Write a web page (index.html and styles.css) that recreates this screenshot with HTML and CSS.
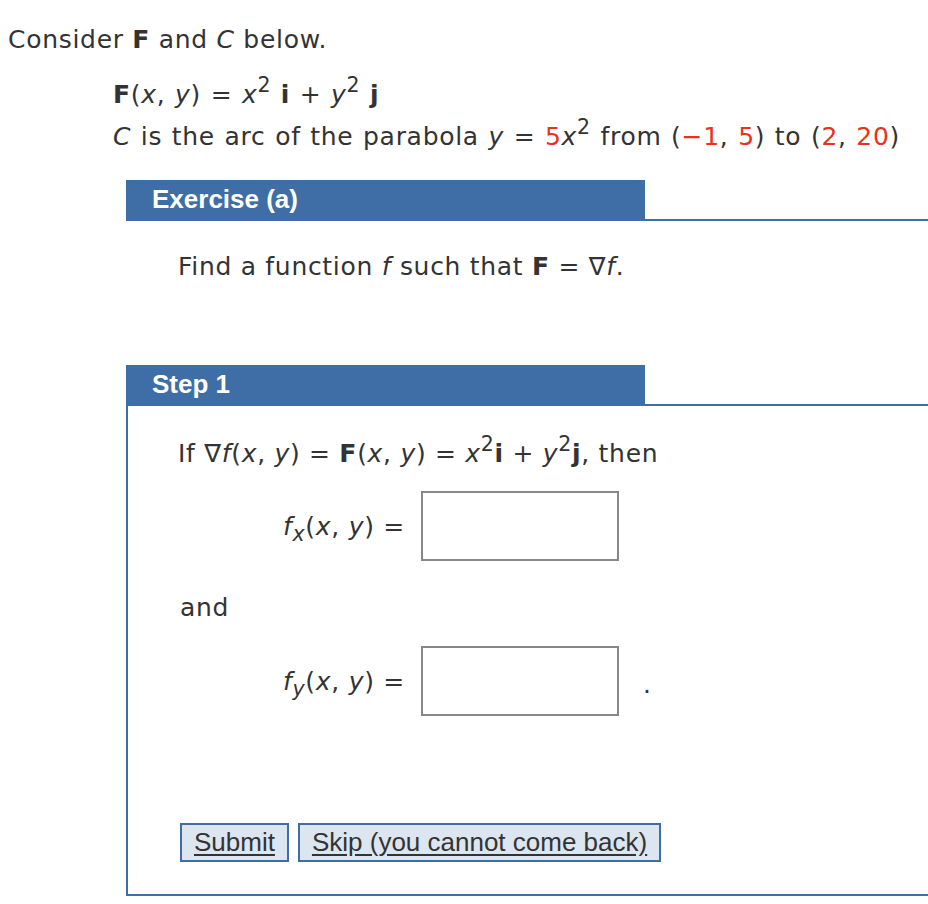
FILE: index.html
```html
<!DOCTYPE html>
<html>
<head>
<meta charset="utf-8">
<link rel="stylesheet" href="styles.css">
</head>
<body>
<div class="page">
  <p class="intro">Consider <b>F</b> and <i>C</i> below.</p>
  <div class="given">
    <div><b>F</b>(<i>x</i>, <i>y</i>) = <i>x</i><sup>2</sup> <b>i</b> + <i>y</i><sup>2</sup> <b>j</b></div>
    <div><i>C</i> is the arc of the parabola <i>y</i> = <span class="red">5</span><i>x</i><sup>2</sup> from (<span class="red">&minus;1</span>, <span class="red">5</span>) to (<span class="red">2</span>, <span class="red">20</span>)</div>
  </div>

  <div class="section exercise">
    <div class="head"><div class="tab">Exercise (a)</div></div>
    <p class="question">Find a function <i>f</i> such that <b>F</b> = &nabla;<i>f</i>.</p>
  </div>

  <div class="section step">
    <div class="head"><div class="tab">Step 1</div></div>
    <div class="body">
      <p class="line">If &nabla;<i>f</i>(<i>x</i>, <i>y</i>) = <b>F</b>(<i>x</i>, <i>y</i>) = <i>x</i><sup>2</sup><b>i</b> + <i>y</i><sup>2</sup><b>j</b>, then</p>
      <div class="row row-x">
        <span class="label"><i>f</i><sub><i>x</i></sub>(<i>x</i>, <i>y</i>) =</span>
        <span class="box"></span>
      </div>
      <p class="line and">and</p>
      <div class="row row-y">
        <span class="label"><i>f</i><sub><i>y</i></sub>(<i>x</i>, <i>y</i>) =</span>
        <span class="box"></span>
        <span class="dot">.</span>
      </div>
      <div class="buttons">
        <button class="btn"><u>Submit</u></button>
        <button class="btn"><u>Skip (you cannot come back)</u></button>
      </div>
    </div>
  </div>
</div>
</body>
</html>
```

FILE: styles.css
```css
html, body {
  margin: 0;
  padding: 0;
  background: #fff;
  overflow: hidden;
}
body {
  font-family: "DejaVu Sans", Verdana, sans-serif;
  font-size: 25px;
  letter-spacing: 0.7px;
  color: #333;
}
.page {
  padding-top: 26px;
  padding-left: 8px;
}
p { margin: 0; }
.intro {
  line-height: 28px;
}
sup {
  font-size: 0.82em;
  line-height: 0;
  vertical-align: 0.55em;
}
sub {
  font-size: 0.82em;
  line-height: 0;
  vertical-align: -0.3em;
}
.given {
  margin-top: 20px;
  margin-left: 105px;
  line-height: 42px;
  word-spacing: 1px;
}
.red { color: #e8321e; }

.section {
  margin-left: 118px;
  width: 900px;
}
.head {
  border-bottom: 2px solid #3f6ea7;
}
.tab {
  width: 519px;
  height: 39px;
  background: #3f6ea7;
  color: #fff;
  font-family: "Liberation Sans", Arial, sans-serif;
  font-weight: bold;
  font-size: 26px;
  letter-spacing: 0;
  line-height: 39px;
  padding-left: 26px;
  box-sizing: border-box;
}
.exercise {
  margin-top: 22px;
}
.question {
  margin-top: 32px;
  margin-left: 52px;
  line-height: 28px;
}
.step {
  margin-top: 84px;
}
.step .body {
  border-left: 2px solid #3f6ea7;
  border-bottom: 2px solid #3f6ea7;
  padding: 34px 0 32px 50px;
}
.line {
  line-height: 28px;
}
.row {
  display: flex;
  align-items: center;
  margin-left: 105px;
}
.row-x { margin-top: 23px; }
.row-y { margin-top: 24px; }
.label {
  white-space: nowrap;
}
.box {
  width: 198px;
  height: 70px;
  box-sizing: border-box;
  border: 2px solid #888;
  margin-left: 16px;
  background: #fff;
}
.dot {
  margin-left: 24px;
  margin-top: 6px;
}
.and {
  margin-top: 33px;
  margin-left: 2px;
}
.buttons {
  display: flex;
  gap: 9px;
  margin-top: 107px;
  margin-left: 2px;
}
.btn {
  font-family: "Liberation Sans", Arial, sans-serif;
  font-size: 26px;
  letter-spacing: 0;
  color: #333;
  background: #dce6f0;
  border: 2px solid #3f6ea7;
  height: 39px;
  padding: 0 12px;
  margin: 0;
  line-height: 35px;
  border-radius: 0;
}
.btn u {
  text-underline-offset: 3px;
}
```
